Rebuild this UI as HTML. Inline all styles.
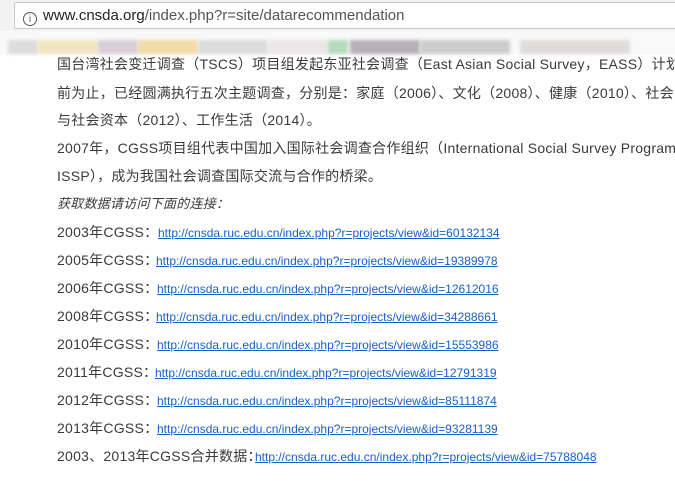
<!DOCTYPE html>
<html><head><meta charset="utf-8"><style>
*{margin:0;padding:0}
body{width:675px;height:503px;overflow:hidden;background:#fff;font-family:"Liberation Sans","Noto Sans CJK SC",sans-serif;position:relative}
.bar{position:absolute;left:0;top:0;width:675px;height:31px;background:#f2f2f2}
.url{position:absolute;left:14px;top:2px;width:670px;height:25px;background:#fff;border:1px solid #c8c8c8;border-radius:2px;font-size:15px;line-height:25px;color:#555}
.url b{font-weight:normal;color:#222}
.bm{position:absolute;left:0;top:31px;width:675px;height:24px;background:#f9f9f9}
.blk{position:absolute;height:14px;top:40px;filter:blur(1.5px)}
.t{position:absolute;left:57px;font-size:14px;color:#3a3a3a;white-space:nowrap;line-height:20px;letter-spacing:0.25px}
.a{position:absolute;font-size:12px;color:#1a5fc8;text-decoration:underline;white-space:nowrap;line-height:20px}
</style></head><body>
<div class="bar"></div>
<div class="url"><span style="display:inline-block;width:14px;height:14px;border:1.5px solid #555;border-radius:50%;font-size:10px;line-height:14px;text-align:center;margin:0 6px 0 8px;vertical-align:-2px;box-sizing:border-box">i</span><b>www.cnsda.org</b>/index.php?r=site/datarecommendation</div>
<div class="bm"></div>
<div class="blk" style="left:8px;width:30px;background:#ddd"></div>
<div class="blk" style="left:38px;width:60px;background:#f0e5c0"></div>
<div class="blk" style="left:98px;width:40px;background:#d8d0d6"></div>
<div class="blk" style="left:138px;width:60px;background:#f2dca8"></div>
<div class="blk" style="left:198px;width:70px;background:#ddd"></div>
<div class="blk" style="left:268px;width:60px;background:#ece6e8"></div>
<div class="blk" style="left:328px;width:20px;background:#b4dcbc"></div>
<div class="blk" style="left:350px;width:70px;background:#b8b0b8"></div>
<div class="blk" style="left:420px;width:90px;background:#ccc"></div>
<div class="blk" style="left:520px;width:110px;background:#e0dcdc"></div>
<div class="t" style="top:54px">国台湾社会变迁调查（TSCS）项目组发起东亚社会调查（East Asian Social Survey，EASS）计划</div>
<div class="t" style="top:83px">前为止，已经圆满执行五次主题调查，分别是：家庭（2006）、文化（2008）、健康（2010）、社会</div>
<div class="t" style="top:110px">与社会资本（2012）、工作生活（2014）。</div>
<div class="t" style="top:138px">2007年，CGSS项目组代表中国加入国际社会调查合作组织（International Social Survey Programme，</div>
<div class="t" style="top:166px">ISSP），成为我国社会调查国际交流与合作的桥梁。</div>
<div class="t" style="top:194px;font-style:italic;font-size:13px">获取数据请访问下面的连接：</div>
<div class="t" style="top:222px">2003年CGSS：</div><div class="a" style="left:158px;top:223px">http://cnsda.ruc.edu.cn/index.php?r=projects/view&amp;id=60132134</div>
<div class="t" style="top:250px">2005年CGSS：</div><div class="a" style="left:156px;top:251px">http://cnsda.ruc.edu.cn/index.php?r=projects/view&amp;id=19389978</div>
<div class="t" style="top:278px">2006年CGSS：</div><div class="a" style="left:157px;top:279px">http://cnsda.ruc.edu.cn/index.php?r=projects/view&amp;id=12612016</div>
<div class="t" style="top:306px">2008年CGSS：</div><div class="a" style="left:156px;top:307px">http://cnsda.ruc.edu.cn/index.php?r=projects/view&amp;id=34288661</div>
<div class="t" style="top:334px">2010年CGSS：</div><div class="a" style="left:157px;top:335px">http://cnsda.ruc.edu.cn/index.php?r=projects/view&amp;id=15553986</div>
<div class="t" style="top:362px">2011年CGSS：</div><div class="a" style="left:155px;top:363px">http://cnsda.ruc.edu.cn/index.php?r=projects/view&amp;id=12791319</div>
<div class="t" style="top:390px">2012年CGSS：</div><div class="a" style="left:157px;top:391px">http://cnsda.ruc.edu.cn/index.php?r=projects/view&amp;id=85111874</div>
<div class="t" style="top:418px">2013年CGSS：</div><div class="a" style="left:157px;top:419px">http://cnsda.ruc.edu.cn/index.php?r=projects/view&amp;id=93281139</div>
<div class="t" style="top:446px">2003、2013年CGSS合并数据：</div><div class="a" style="left:255px;top:447px">http://cnsda.ruc.edu.cn/index.php?r=projects/view&amp;id=75788048</div>
</body></html>
